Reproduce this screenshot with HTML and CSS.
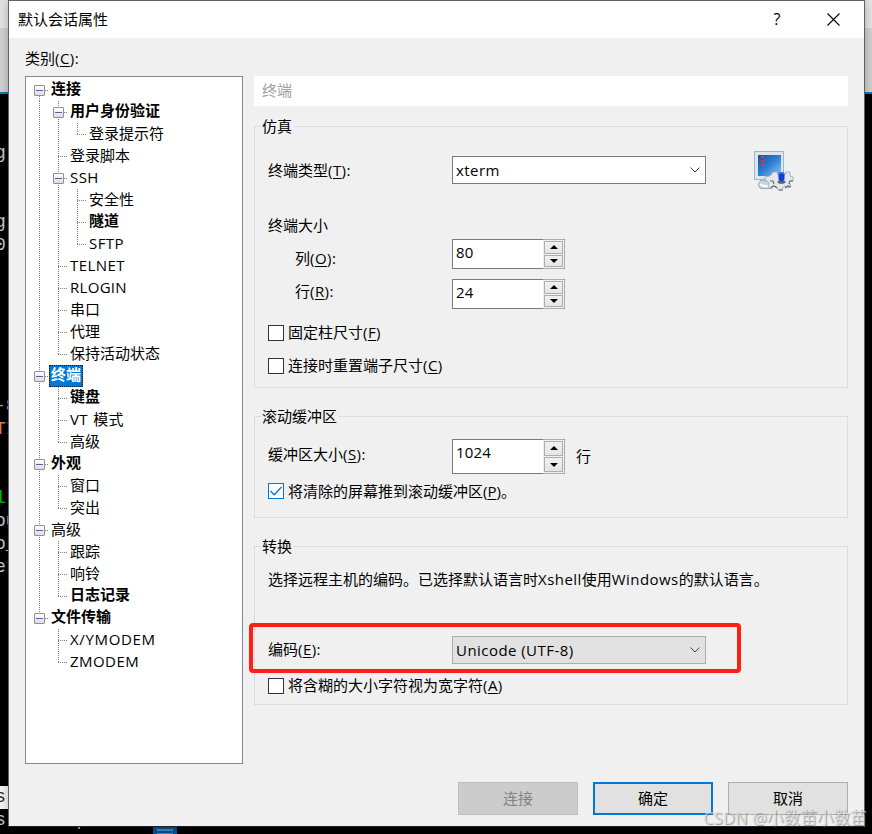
FILE: index.html
```
<!DOCTYPE html>
<html lang="zh-CN">
<head>
<meta charset="utf-8">
<title>默认会话属性</title>
<link rel="stylesheet" href="styles.css">
</head>
<body>
<div class="backdrop">
  <div class="strip-light"></div>
  <div class="strip-grey"></div>
  <div class="strip-blue"></div>
<pre class="term">g:


g:
0






<span class="steel">-8</span>
<span class="orange">TI</span>


<span class="green">l:</span>
ou
o_
er









<span class="inv">s:</span>
s:</pre>
  <div class="below"><span class="below-char">r</span><span class="below-tile"></span></div>
</div>

<div class="dialog">
  <header class="titlebar">
    <span class="title">默认会话属性</span>
    <span class="help">?</span>
    <svg class="close" width="13" height="13" viewBox="0 0 13 13"><path d="M.5.5l12 12M12.5.5l-12 12" stroke="#000" stroke-width="1.1" fill="none"/></svg>
  </header>
  <div class="caption">类别<span class="lat">(<u>C</u>):</span></div>
  <div class="main">
    <ul class="tree">
      <li><i class="g x dn"><b></b></i><span class="bold">连接</span></li>
      <li><i class="g v"></i><i class="g x up dn"><b></b></i><span class="bold">用户身份验证</span></li>
      <li><i class="g v"></i><i class="g v"></i><i class="g l"></i><span>登录提示符</span></li>
      <li><i class="g v"></i><i class="g t"></i><span>登录脚本</span></li>
      <li><i class="g v"></i><i class="g x up dn"><b></b></i><span class="lat">SSH</span></li>
      <li><i class="g v"></i><i class="g v"></i><i class="g t"></i><span>安全性</span></li>
      <li><i class="g v"></i><i class="g v"></i><i class="g t"></i><span class="bold">隧道</span></li>
      <li><i class="g v"></i><i class="g v"></i><i class="g l"></i><span class="lat">SFTP</span></li>
      <li><i class="g v"></i><i class="g t"></i><span class="lat">TELNET</span></li>
      <li><i class="g v"></i><i class="g t"></i><span class="lat narrow">RLOGIN</span></li>
      <li><i class="g v"></i><i class="g t"></i><span>串口</span></li>
      <li><i class="g v"></i><i class="g t"></i><span>代理</span></li>
      <li><i class="g v"></i><i class="g l"></i><span>保持活动状态</span></li>
      <li><i class="g x up dn"><b></b></i><span class="bold selected">终端</span></li>
      <li><i class="g v"></i><i class="g t"></i><span class="bold">键盘</span></li>
      <li><i class="g v"></i><i class="g t"></i><span class="mode">VT 模式</span></li>
      <li><i class="g v"></i><i class="g l"></i><span>高级</span></li>
      <li><i class="g x up dn"><b></b></i><span class="bold">外观</span></li>
      <li><i class="g v"></i><i class="g t"></i><span>窗口</span></li>
      <li><i class="g v"></i><i class="g l"></i><span>突出</span></li>
      <li><i class="g x up dn"><b></b></i><span>高级</span></li>
      <li><i class="g v"></i><i class="g t"></i><span>跟踪</span></li>
      <li><i class="g v"></i><i class="g t"></i><span>响铃</span></li>
      <li><i class="g v"></i><i class="g l"></i><span class="bold">日志记录</span></li>
      <li><i class="g x up"><b></b></i><span class="bold">文件传输</span></li>
      <li><i class="g"></i><i class="g t"></i><span class="lat wide">X/YMODEM</span></li>
      <li><i class="g"></i><i class="g l"></i><span class="lat">ZMODEM</span></li>
    </ul>

    <div class="page">
      <div class="page-title">终端</div>

      <section class="group emulation">
        <h2>仿真</h2>
        <div class="row type-row">
          <label>终端类型<span class="lat">(<u>T</u>):</span></label>
          <div class="select"><span class="lat">xterm</span><svg width="10" height="6" viewBox="0 0 10 6"><path d="M.5.5L5 5 9.5.5" fill="none" stroke="#444" stroke-width="1"/></svg></div>
          <svg class="pc" width="40" height="40" viewBox="0 0 40 40">
            <defs>
              <linearGradient id="scr" x1="0" y1="0" x2="1" y2="1"><stop offset="0" stop-color="#1550a4"/><stop offset=".5" stop-color="#2f80d2"/><stop offset="1" stop-color="#8cc8f4"/></linearGradient>
            </defs>
            <path d="M7 29q-5 6 0 8.500h11l3-8z" fill="#c9d3da" stroke="#9aa9b6"/>
            <path d="M6 33q5 4 11 1" fill="none" stroke="#fff" stroke-width="2"/>
            <rect x=".5" y=".5" width="29" height="28" fill="#d8e8f3" stroke="#9cb8ce"/>
            <rect x="4" y="4" width="23" height="21" fill="url(#scr)"/>
            <g fill="#f03038"><rect x="7" y="5" width="3" height="2"/><rect x="7" y="9" width="3" height="2"/><rect x="7" y="13" width="3" height="2"/></g>
            <path d="M19 21h4l1 3h7l1-3h4v4l3 1v4h-3l-1 3 2 1-2 3-4-2-2 1-1 3h-4l-1-3-3-1-3 2-3-2 1-3-2-2h-2v-4l5-1z" fill="#e4e8ec" stroke="#9aa6b0" stroke-width=".8"/>
            <path d="M16 30h3l1 3M39 30h-3l-1 3M17 36l3-1 3 2M37 36l-3-1-3 2M25 39h4" fill="none" stroke="#606c76" stroke-width="1.200"/>
            <ellipse cx="27.500" cy="31" rx="4" ry="1.800" fill="#59646d"/>
            <rect x="24.500" y="21" width="6" height="9" rx="2" fill="#123fd0"/>
            <path d="M25 22.500q2.500-2 5 0" stroke="#6e9cff" fill="none"/>
          </svg>
        </div>
        <div class="row size-head"><label>终端大小</label></div>
        <div class="row cols-row">
          <label class="indent">列<span class="lat">(<u>O</u>):</span></label>
          <div class="spin"><span class="lat">80</span><div class="arrows"><i class="arrow up-arrow"></i><i class="arrow down-arrow"></i></div></div>
        </div>
        <div class="row rows-row">
          <label class="indent">行<span class="lat">(<u>R</u>):</span></label>
          <div class="spin"><span class="lat">24</span><div class="arrows"><i class="arrow up-arrow"></i><i class="arrow down-arrow"></i></div></div>
        </div>
        <div class="check fixed-row"><i class="box"></i><span>固定柱尺寸<span class="lat">(<u>F</u>)</span></span></div>
        <div class="check reset-row"><i class="box"></i><span>连接时重置端子尺寸<span class="lat">(<u>C</u>)</span></span></div>
      </section>

      <section class="group buffer">
        <h2>滚动缓冲区</h2>
        <div class="row buffer-row">
          <label>缓冲区大小<span class="lat">(<u>S</u>):</span></label>
          <div class="spin tall"><span class="lat">1024</span><div class="arrows"><i class="arrow up-arrow"></i><i class="arrow down-arrow"></i></div></div>
          <span class="unit">行</span>
        </div>
        <div class="check push-row"><i class="box on"><svg width="14" height="14" viewBox="0 0 14 14"><path d="M1.500 7l3.700 3.700L12.500 3" fill="none" stroke="#0078d7" stroke-width="1.300"/></svg></i><span>将清除的屏幕推到滚动缓冲区(<u>P</u>)。</span></div>
      </section>

      <section class="group convert">
        <h2>转换</h2>
        <p>选择远程主机的编码。已选择默认语言时<span class="lat">Xshell</span>使用<span class="lat">Windows</span>的默认语言。</p>
        <div class="row encoding-row">
          <label>编码<span class="lat">(<u>E</u>):</span></label>
          <div class="select grey"><span class="lat">Unicode (UTF-8)</span><svg width="10" height="6" viewBox="0 0 10 6"><path d="M.5.5L5 5 9.5.5" fill="none" stroke="#444" stroke-width="1"/></svg></div>
        </div>
        <div class="check wide-row"><i class="box"></i><span>将含糊的大小字符视为宽字符<span class="lat">(<u>A</u>)</span></span></div>
        <div class="mark"></div>
      </section>

      <footer class="buttons">
        <div class="btn disabled">连接</div>
        <div class="btn primary">确定</div>
        <div class="btn">取消</div>
      </footer>
    </div>
  </div>
</div>
<div class="watermark">CSDN @小数苗小数苗</div>
</body>
</html>
```

FILE: styles.css
```
* { box-sizing: border-box; }
body {
  margin: 0;
  width: 872px;
  height: 834px;
  overflow: hidden;
  position: relative;
  background: #000;
  color: #000;
  font: 15px/20px "Open Sans", "Noto Sans CJK SC", sans-serif;
}
u { text-decoration: underline; text-decoration-thickness: 1px; text-underline-offset: 2px; text-decoration-skip-ink: none; }
.lat { letter-spacing: .45px; }
.lat.narrow { letter-spacing: .3px; }
.lat.wide { letter-spacing: .65px; }

/* windows behind the dialog */
.backdrop { position: absolute; inset: 0; overflow: hidden; display: flex; flex-direction: column; }
.strip-light { flex: none; height: 28px; background: #e2e2e2; }
.strip-grey { flex: none; height: 64px; background: #cfcfcf; }
.strip-blue { flex: none; height: 2px; background: #0079c8; }
.term {
  flex: none;
  margin: 48px 0 0 -5px;
  height: 684px;
  color: #c8c8c8;
  font: 18px/23px "Liberation Mono", monospace;
}
.steel { color: #8ba0b4; }
.orange { color: #d08040; }
.green { color: #00c000; }
.inv { display: inline-block; width: 20px; background: #f4f4f4; color: #222; }
.below { flex: none; display: flex; height: 8px; }
.below-char { margin: -11px 0 0 76px; font: 16px/20px "Liberation Mono", monospace; color: #ccc; width: 77px; }
.below-tile { width: 24px; height: 8px; background: linear-gradient(#00549a 0 3px, #4b86b8 3px 5px, #00549a 5px 7px, #4b86b8 7px); border: solid #00549a; border-width: 0 4px; }

/* dialog */
.dialog {
  position: relative;
  width: 857px;
  height: 827px;
  margin-left: 8px;
  border: 1px solid #626262;
  border-bottom-color: #1c2024;
  background: #f0f0f0;
  box-shadow: 0 2px 8px rgba(0, 0, 0, .25);
}
.titlebar { display: flex; align-items: center; height: 37px; padding: 0 24px 0 9px; background: #fff; }
.title { flex: 1; margin-top: -2px; }
.help { width: 14px; margin: -2px 43px 0 0; text-align: center; font-size: 16px; }
.caption { margin: 10px 0 0 16px; height: 20px; }
.main { display: flex; gap: 11px; margin: 8px 16px 0; }

/* category tree */
.tree { flex: none; width: 218px; height: 688px; margin: 0; padding: 2px 0 0 4px; list-style: none; background: #fff; border: 1px solid #828790; }
.tree li { display: flex; height: 22px; line-height: 20px; white-space: nowrap; }
.tree span { padding: 0 2px; height: 22px; }
.tree .bold { font-weight: 700; line-height: 18px; }
.tree .mode { word-spacing: 1.500px; letter-spacing: .2px; }
.tree .selected { background: #0078d7; color: #fff; outline: 1px dotted #20160c; outline-offset: -1px; }
.g { flex: none; width: 19px; height: 22px; background-repeat: no-repeat; --v: repeating-linear-gradient(#808080 0 1px, transparent 1px 2px); --h: repeating-linear-gradient(90deg, #808080 0 1px, transparent 1px 2px); }
.v { background-image: var(--v); background-size: 1px 22px; background-position: 9px 0; }
.t { background-image: var(--v), var(--h); background-size: 1px 22px, 9px 1px; background-position: 9px 0, 9px 11px; }
.l { background-image: var(--v), var(--h); background-size: 1px 11px, 9px 1px; background-position: 9px 0, 9px 11px; }
.x { display: flex; padding: 6px 0 0 4px; background-image: var(--h); background-size: 4px 1px; background-position: 15px 11px; }
.x.up { background-image: var(--v), var(--h); background-size: 1px 6px, 4px 1px; background-position: 9px 0, 15px 11px; }
.x.dn { background-image: var(--v), var(--h); background-size: 1px 5px, 4px 1px; background-position: 9px 17px, 15px 11px; }
.x.up.dn { background-image: var(--v), var(--h); background-size: 1px 22px, 4px 1px; background-position: 9px 0, 15px 11px; }
.x b { width: 11px; height: 11px; border: 1px solid #919191; border-radius: 1px; background: linear-gradient(#4b63a7, #4b63a7) 1px 4px / 7px 1px no-repeat, linear-gradient(#fff, #dcdcdc); }

/* settings page */
.page { flex: 1; }
.page-title { height: 30px; padding: 4px 8px; background: #fff; color: #a0a0a0; }
.group { position: relative; border: 1px solid #dcdcdc; padding-left: 13px; }
.group h2 { width: max-content; height: 20px; margin: -11px 0 0 -7px; padding: 0 2px 0 1px; background: #f0f0f0; font-size: 15px; font-weight: 400; line-height: 20px; }
.emulation { height: 262px; margin-top: 20px; }
.buffer { height: 102px; margin-top: 28px; }
.convert { height: 159px; margin-top: 28px; }
.row { display: flex; }
.row label { width: 184px; line-height: 20px; }
.row .indent { padding-left: 27px; }
.type-row { height: 28px; margin-top: 20px; }
.type-row label { padding-top: 4px; }
.encoding-row label { padding-top: 3px; }
.pc { flex: none; margin: -5px 0 -7px 48px; }
.size-head { height: 20px; margin-top: 31px; }
.cols-row { margin-top: 4px; }
.cols-row label { padding-top: 9px; }
.rows-row { margin-top: 10px; }
.rows-row label { padding-top: 2px; }
.fixed-row { margin-top: 13px; }
.reset-row { margin-top: 13px; }
.buffer-row { margin-top: 13px; }
.buffer-row label { padding-top: 5px; }
.unit { padding: 7px 0 0 11px; }
.push-row { margin-top: 7px; }
.convert p { margin: 13px 0 0; white-space: nowrap; }
.encoding-row { height: 28px; margin-top: 47px; }
.wide-row { margin-top: 11px; }

.select { display: flex; align-items: center; justify-content: space-between; width: 254px; height: 28px; padding: 0 5px 0 3px; background: #fff; border: 1px solid #7a7a7a; }
.select > span { margin-top: -1px; }
.select.grey { background: #e1e1e1; border-color: #adadad; }
.select.grey > span { margin-top: 0; }
.spin { display: flex; width: 113px; height: 30px; border: 1px solid #7a7a7a; border-right-color: #adadad; background: #fff; }
.spin > span { flex: 1; padding: 2px 0 0 3px; letter-spacing: .2px; }
.tall { height: 35px; }
.arrows { display: flex; flex-direction: column; gap: 1px; width: 21px; margin: -1px 0; padding: 1px; border: solid #adadad; border-width: 1px 0; background: #f0f0f0; }
.arrow { flex: 1; display: flex; align-items: center; justify-content: center; border: 1px solid #adadad; background: linear-gradient(#f0f0f0, #e5e5e5); }
.arrow::after { content: ""; border: solid transparent; border-width: 0 4px; }
.up-arrow::after { border-bottom: 4px solid #000; margin-bottom: 1px; }
.down-arrow::after { border-top: 4px solid #000; }

.check { display: flex; height: 20px; white-space: nowrap; }
.box { width: 16px; height: 16px; margin: 3px 4px 0 0; border: 1px solid #333; background: #fff; }
.box.on { margin-top: 2px; border-color: #0078d7; }
.box svg { display: block; }
.mark { position: absolute; left: -6px; top: 76px; width: 492px; height: 50px; border: 4px solid #ff2013; border-radius: 4px; }

.buttons { display: flex; justify-content: flex-end; gap: 15px; margin-top: 77px; }
.btn { width: 120px; height: 33px; border: 1px solid #adadad; background: #e1e1e1; text-align: center; line-height: 31px; }
.btn.primary { border: 2px solid #0078d7; line-height: 29px; }
.btn.disabled { border-color: #bfbfbf; background: #ccc; color: #838383; }

.watermark { position: absolute; right: 5px; bottom: 5px; font-size: 16.500px; line-height: 22px; letter-spacing: .15px; color: rgba(225, 225, 225, .75); text-shadow: 1px 1px 1px rgba(90, 90, 90, .6); white-space: nowrap; }
```
